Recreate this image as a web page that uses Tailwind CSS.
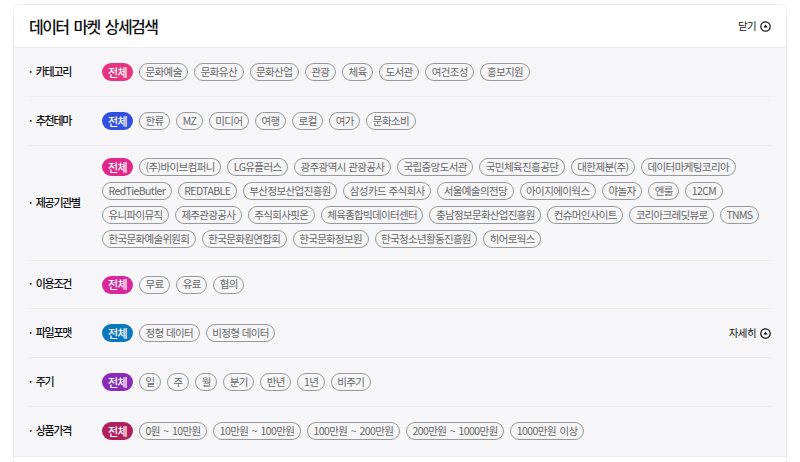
<!DOCTYPE html>
<html lang="ko">
<head>
<meta charset="utf-8">
<script src="https://cdn.jsdelivr.net/npm/@tailwindcss/browser@4"></script>
</head>
<body class="bg-white font-['Noto_Sans_CJK_KR',sans-serif] overflow-hidden">
<div class="h-[462px] overflow-hidden px-[13px] pt-1">
<div class="w-[774px] rounded-t-md border border-b-0 border-[#ececef] overflow-hidden">
  <div class="h-[43px] bg-white flex items-center justify-between px-[15px] border-b border-[#ececef]">
    <h2 class="text-[16px] font-medium text-[#111] tracking-[-1.55px] [word-spacing:2px] leading-none">데이터 마켓 상세검색</h2>
    <div class="flex items-center gap-[4px] text-[10.5px] tracking-[-0.6px] text-[#111]">닫기
      <svg class="w-[11px] h-[11px]" viewBox="0 0 11 11"><circle cx="5.5" cy="5.5" r="4.7" fill="none" stroke="#111" stroke-width="1.2"/><path d="M5.5 3.6 7.6 6.6H3.4Z" fill="#111"/></svg>
    </div>
  </div>
  <div class="bg-[#f6f6f9] px-[15px] pb-[1px]">
    <div class="flex items-center h-[49px] border-b border-[#ececef]">
      <div class="w-[73px] shrink-0 pb-[2px] text-[11px] font-medium text-[#111] tracking-[-1.3px] [word-spacing:3px]">· 카테고리</div>
      <div class="flex flex-wrap gap-[6px] text-[10.5px] tracking-[-0.6px] text-[#666] [&>span]:h-[18px] [&>span]:px-[5.5px] [&>span]:rounded-full [&>span]:border [&>span]:border-[#999] [&>span]:flex [&>span]:items-center [&>span]:leading-none">
        <b class="h-[18px] w-[31px] rounded-full bg-[#e8347f] text-white font-medium flex items-center justify-center text-[11px] leading-none">전체</b>
        <span>문화예술</span><span>문화유산</span><span>문화산업</span><span>관광</span><span>체육</span><span>도서관</span><span>여건조성</span><span>홍보지원</span>
      </div>
    </div>
    <div class="flex items-center h-[49px] border-b border-[#ececef]">
      <div class="w-[73px] shrink-0 pb-[2px] text-[11px] font-medium text-[#111] tracking-[-1.3px] [word-spacing:3px]">· 추천테마</div>
      <div class="flex flex-wrap gap-[6px] text-[10.5px] tracking-[-0.6px] text-[#666] [&>span]:h-[18px] [&>span]:px-[5.5px] [&>span]:rounded-full [&>span]:border [&>span]:border-[#999] [&>span]:flex [&>span]:items-center [&>span]:leading-none">
        <b class="h-[18px] w-[31px] rounded-full bg-[#3250e0] text-white font-medium flex items-center justify-center text-[11px] leading-none">전체</b>
        <span>한류</span><span>MZ</span><span>미디어</span><span>여행</span><span>로컬</span><span>여가</span><span>문화소비</span>
      </div>
    </div>
    <div class="flex items-center h-[115px] border-b border-[#ececef]">
      <div class="w-[73px] shrink-0 pb-[2px] text-[11px] font-medium text-[#111] tracking-[-1.3px] [word-spacing:3px]">· 제공기관별</div>
      <div class="flex-1 flex flex-wrap gap-[6px] text-[10.5px] tracking-[-0.6px] text-[#666] [&>span]:h-[18px] [&>span]:px-[5.5px] [&>span]:rounded-full [&>span]:border [&>span]:border-[#999] [&>span]:flex [&>span]:items-center [&>span]:leading-none [&>span:nth-child(n+18)]:tracking-[-0.68px]">
        <b class="h-[18px] w-[31px] rounded-full bg-[#e0278c] text-white font-medium flex items-center justify-center text-[11px] leading-none">전체</b>
        <span>(주)바이브컴퍼니</span><span>LG유플러스</span><span>광주광역시 관광공사</span><span>국립중앙도서관</span><span>국민체육진흥공단</span><span>대한제분(주)</span><span>데이터마케팅코리아</span>
        <span>RedTieButler</span><span>REDTABLE</span><span>부산정보산업진흥원</span><span>삼성카드 주식회사</span><span>서울예술의전당</span><span>아이지에이웍스</span><span>야놀자</span><span>엔룰</span><span>12CM</span>
        <span>유니파이뮤직</span><span>제주관광공사</span><span>주식회사핏온</span><span>체육종합빅데이터센터</span><span>충남정보문화산업진흥원</span><span>컨슈머인사이트</span><span>코리아크레딧뷰로</span><span>TNMS</span>
        <span>한국문화예술위원회</span><span>한국문화원연합회</span><span>한국문화정보원</span><span>한국청소년활동진흥원</span><span>히어로웍스</span>
      </div>
    </div>
    <div class="flex items-center h-[48px] border-b border-[#ececef]">
      <div class="w-[73px] shrink-0 pb-[2px] text-[11px] font-medium text-[#111] tracking-[-1.3px] [word-spacing:3px]">· 이용조건</div>
      <div class="flex flex-wrap gap-[6px] text-[10.5px] tracking-[-0.6px] text-[#666] [&>span]:h-[18px] [&>span]:px-[5.5px] [&>span]:rounded-full [&>span]:border [&>span]:border-[#999] [&>span]:flex [&>span]:items-center [&>span]:leading-none">
        <b class="h-[18px] w-[31px] rounded-full bg-[#d9269b] text-white font-medium flex items-center justify-center text-[11px] leading-none">전체</b>
        <span>무료</span><span>유료</span><span>협의</span>
      </div>
    </div>
    <div class="flex items-center h-[49px] border-b border-[#ececef]">
      <div class="w-[73px] shrink-0 pb-[2px] text-[11px] font-medium text-[#111] tracking-[-1.3px] [word-spacing:3px]">· 파일포맷</div>
      <div class="flex-1 flex flex-wrap gap-[6px] text-[10.5px] tracking-[-0.6px] text-[#666] [&>span]:h-[18px] [&>span]:px-[5.5px] [&>span]:rounded-full [&>span]:border [&>span]:border-[#999] [&>span]:flex [&>span]:items-center [&>span]:leading-none">
        <b class="h-[18px] w-[31px] rounded-full bg-[#0a78bf] text-white font-medium flex items-center justify-center text-[11px] leading-none">전체</b>
        <span>정형 데이터</span><span>비정형 데이터</span>
      </div>
      <div class="flex items-center gap-[4px] text-[10.5px] tracking-[-0.6px] text-[#111]">자세히
        <svg class="w-[11px] h-[11px]" viewBox="0 0 11 11"><circle cx="5.5" cy="5.5" r="4.7" fill="none" stroke="#111" stroke-width="1.2"/><path d="M5.5 3.6 7.6 6.6H3.4Z" fill="#111"/></svg>
      </div>
    </div>
    <div class="flex items-center h-[49px] border-b border-[#ececef]">
      <div class="w-[73px] shrink-0 pb-[2px] text-[11px] font-medium text-[#111] tracking-[-1.3px] [word-spacing:3px]">· 주기</div>
      <div class="flex flex-wrap gap-[6px] text-[10.5px] tracking-[-0.6px] text-[#666] [&>span]:h-[18px] [&>span]:px-[5.5px] [&>span]:rounded-full [&>span]:border [&>span]:border-[#999] [&>span]:flex [&>span]:items-center [&>span]:leading-none">
        <b class="h-[18px] w-[31px] rounded-full bg-[#8a2cb8] text-white font-medium flex items-center justify-center text-[11px] leading-none">전체</b>
        <span>일</span><span>주</span><span>월</span><span>분기</span><span>반년</span><span>1년</span><span>비주기</span>
      </div>
    </div>
    <div class="flex items-center h-[48px]">
      <div class="w-[73px] shrink-0 pb-[2px] text-[11px] font-medium text-[#111] tracking-[-1.3px] [word-spacing:3px]">· 상품가격</div>
      <div class="flex flex-wrap gap-[6px] text-[10.5px] tracking-[-0.56px] [word-spacing:1px] text-[#666] [&>span]:h-[18px] [&>span]:px-[5.5px] [&>span]:rounded-full [&>span]:border [&>span]:border-[#999] [&>span]:flex [&>span]:items-center [&>span]:leading-none">
        <b class="h-[18px] w-[31px] rounded-full bg-[#b01f5e] text-white font-medium flex items-center justify-center text-[11px] leading-none">전체</b>
        <span>0원 ~ 10만원</span><span>10만원 ~ 100만원</span><span>100만원 ~ 200만원</span><span>200만원 ~ 1000만원</span><span>1000만원 이상</span>
      </div>
    </div>
  </div>
  <div class="h-[8px] bg-white border-t border-[#ececef]"></div>
</div>
</div>
</body>
</html>
